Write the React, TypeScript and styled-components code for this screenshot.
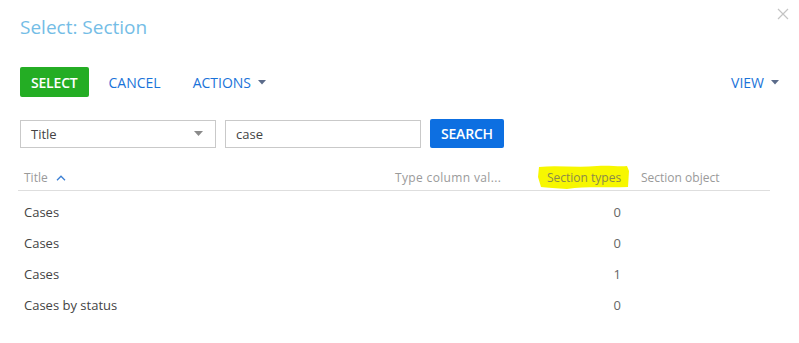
import React from "react";
import styled, { createGlobalStyle } from "styled-components";

const Global = createGlobalStyle`
  html, body { margin: 0; padding: 0; background: #fff; }
  body { font-family: "Open Sans", "Liberation Sans", sans-serif; }
  * { box-sizing: border-box; }
`;

const Dialog = styled.div`
  position: relative;
  width: 799px;
  height: 343px;
  padding: 0 20px;
  background: #fff;
`;

const Title = styled.h1`
  margin: 0;
  padding-top: 13px;
  height: 42px;
  font-size: 19px;
  font-weight: 400;
  line-height: 28px;
  color: #74bde6;
`;

const Close = styled.button`
  position: absolute;
  top: 8px;
  right: 10px;
  width: 12px;
  height: 12px;
  padding: 0;
  border: 0;
  background: none;
  display: flex;
`;

const Toolbar = styled.div`
  display: flex;
  align-items: center;
  margin-top: 25px;
  height: 30px;
`;

const PrimaryButton = styled.button<{ $color: string }>`
  height: ${(p) => (p.$color === "green" ? "30px" : "29px")};
  padding: 0 11px;
  border: 0;
  border-radius: 2px;
  background: ${(p) => (p.$color === "green" ? "#24ad24" : "#0d6fe1")};
  color: #fff;
  font-family: inherit;
  font-size: 14px;
  font-weight: 600;
  letter-spacing: -0.2px;
`;

const LinkButton = styled.button<{ $ml?: number }>`
  display: flex;
  align-items: center;
  gap: 7px;
  margin-left: ${(p) => p.$ml ?? 0}px;
  padding: 0;
  border: 0;
  background: none;
  color: #1a73d9;
  font-family: inherit;
  font-size: 14px;
`;

const Spacer = styled.div`
  flex: 1;
`;

const FilterRow = styled.div`
  display: flex;
  align-items: center;
  margin-top: 22px;
  height: 29px;
`;

const SelectBox = styled.div`
  display: flex;
  align-items: center;
  justify-content: space-between;
  width: 196px;
  height: 28px;
  padding: 0 12px 0 10px;
  border: 1px solid #c9c9c9;
  font-size: 13px;
  color: #444;
`;

const TextBox = styled.div`
  display: flex;
  align-items: center;
  width: 196px;
  height: 28px;
  margin-left: 9px;
  margin-right: 9px;
  padding: 0 10px;
  border: 1px solid #c9c9c9;
  font-size: 13px;
  color: #444;
`;

const Table = styled.div`
  margin-top: 17px;
  margin-left: -2px;
  width: 752px;
`;

const Body = styled.div`
  padding-top: 5px;
`;

const Row = styled.div<{ $head?: boolean }>`
  display: grid;
  grid-template-columns: 371px 152px 94px 135px;
  align-items: center;
  height: ${(p) => (p.$head ? "26px" : "31px")};
  border-bottom: ${(p) => (p.$head ? "1px solid #dedede" : "0")};
  font-size: ${(p) => (p.$head ? "12px" : "13px")};
  color: ${(p) => (p.$head ? "#9a9a9a" : "#444")};
`;

const Cell = styled.div<{ $right?: boolean; $wide?: boolean }>`
  position: relative;
  display: flex;
  align-items: center;
  gap: 8px;
  padding: 0 ${(p) => (p.$right ? "14px" : "6px")} 0 6px;
  justify-content: ${(p) => (p.$right ? "flex-end" : "flex-start")};
  white-space: nowrap;
  letter-spacing: ${(p) => (p.$wide ? "0.35px" : "0")};
`;

const Num = styled.span`
  color: #666;
`;

const Marker = styled.svg`
  position: absolute;
  left: -4px;
  top: -6px;
  width: 94px;
  height: 27px;
  z-index: 0;
`;

const OverText = styled.span`
  position: relative;
  z-index: 1;
  color: #8a8a4a;
`;

const Caret = () => (
  <svg width="8" height="5" viewBox="0 0 8 5">
    <path d="M0 0 H8 L4 4.5 Z" fill="#5b6b8a" />
  </svg>
);

const rows = [
  { title: "Cases", n: "0" },
  { title: "Cases", n: "0" },
  { title: "Cases", n: "1" },
  { title: "Cases by status", n: "0" },
];

export default function App() {
  return (
    <>
      <Global />
      <Dialog>
        <Title>Select: Section</Title>
        <Close aria-label="close">
          <svg width="12" height="12" viewBox="0 0 12 12">
            <path d="M1 1 L11 11 M11 1 L1 11" stroke="#c4c4c4" strokeWidth="1.2" />
          </svg>
        </Close>
        <Toolbar>
          <PrimaryButton $color="green">SELECT</PrimaryButton>
          <LinkButton $ml={20}>CANCEL</LinkButton>
          <LinkButton $ml={32}>
            ACTIONS <Caret />
          </LinkButton>
          <Spacer />
          <LinkButton>
            VIEW <Caret />
          </LinkButton>
        </Toolbar>
        <FilterRow>
          <SelectBox>
            <span>Title</span>
            <svg width="9" height="5" viewBox="0 0 9 5">
              <path d="M0 0 H9 L4.5 5 Z" fill="#8a8a8a" />
            </svg>
          </SelectBox>
          <TextBox>case</TextBox>
          <PrimaryButton $color="blue">SEARCH</PrimaryButton>
        </FilterRow>
        <Table>
          <Row $head>
            <Cell>
              Title
              <svg width="10" height="6" viewBox="0 0 10 6">
                <path d="M1 5.2 L5 1.2 L9 5.2" fill="none" stroke="#3b7fd4" strokeWidth="1.3" />
              </svg>
            </Cell>
            <Cell $wide>Type column val...</Cell>
            <Cell>
              <Marker viewBox="0 0 94 27" preserveAspectRatio="none">
                <path
                  d="M2 4 C20 2 40 5 60 3 C72 2 82 4 90 3 L92 8 L91 24 C70 25 50 23 30 26 C20 25 10 25 4 24 L1 14 Z"
                  fill="#f7f700"
                />
              </Marker>
              <OverText>Section types</OverText>
            </Cell>
            <Cell>Section object</Cell>
          </Row>
          <Body>
            {rows.map((r, i) => (
              <Row key={i}>
                <Cell>{r.title}</Cell>
                <Cell />
                <Cell $right>
                  <Num>{r.n}</Num>
                </Cell>
                <Cell />
              </Row>
            ))}
          </Body>
        </Table>
      </Dialog>
    </>
  );
}
